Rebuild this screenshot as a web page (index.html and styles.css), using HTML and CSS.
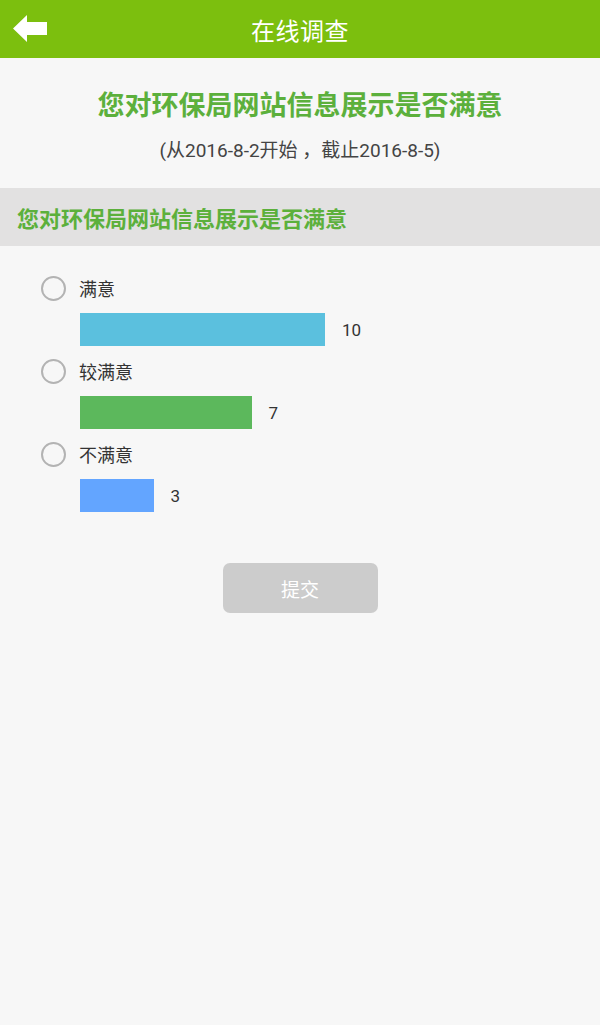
FILE: index.html
```html
<!DOCTYPE html>
<html lang="zh">
<head>
<meta charset="utf-8">
<title>在线调查</title>
<link rel="stylesheet" href="styles.css">
</head>
<body>
<header class="topbar">
  <a class="back" aria-label="返回">
    <svg width="34" height="27" viewBox="0 0 34 27"><polygon points="0,13.5 14,0 14,7 34,7 34,20 14,20 14,27" fill="#fff"/></svg>
  </a>
  <h1 class="topbar-title">在线调查</h1>
</header>
<section class="intro">
  <h2 class="survey-title">您对环保局网站信息展示是否满意</h2>
  <p class="survey-date">(从2016-8-2开始 ，截止2016-8-5)</p>
</section>
<div class="question">您对环保局网站信息展示是否满意</div>
<ul class="options">
  <li class="option">
    <label class="choice"><span class="radio"></span><span class="label">满意</span></label>
    <div class="result"><div class="track"><span class="bar bar-blue" style="width:50%"></span><span class="count">10</span></div></div>
  </li>
  <li class="option">
    <label class="choice"><span class="radio"></span><span class="label">较满意</span></label>
    <div class="result"><div class="track"><span class="bar bar-green" style="width:35%"></span><span class="count">7</span></div></div>
  </li>
  <li class="option">
    <label class="choice"><span class="radio"></span><span class="label">不满意</span></label>
    <div class="result"><div class="track"><span class="bar bar-sky" style="width:15%"></span><span class="count">3</span></div></div>
  </li>
</ul>
<div class="actions"><button class="submit">提交</button></div>
</body>
</html>
```
FILE: styles.css
```css
* { box-sizing: border-box; }
html, body { margin: 0; padding: 0; }
body {
  background: #f7f7f7;
  font-family: Roboto, "Noto Sans CJK SC", "Noto Sans", sans-serif;
  color: #333;
  width: 600px;
  min-height: 1025px;
}
.topbar {
  height: 58px;
  background: #7cbf0e;
  display: flex;
  align-items: center;
  justify-content: center;
  position: relative;
}
.back {
  position: absolute;
  left: 13px;
  top: 15px;
  display: block;
  width: 34px;
  height: 27px;
}
.back svg { display: block; }
.topbar-title {
  margin: 0;
  color: #fff;
  font-size: 24px;
  font-weight: normal;
  letter-spacing: 0.5px;
}
.intro {
  text-align: center;
  padding: 30px 0 24px;
}
.survey-title {
  margin: 0;
  color: #5cb03c;
  font-size: 27px;
  font-weight: bold;
  line-height: 36px;
}
.survey-date {
  margin: 14px 0 0;
  color: #444;
  font-size: 19px;
  line-height: 26px;
}
.question {
  height: 58px;
  background: #e2e1e1;
  color: #5cb03c;
  font-size: 22px;
  font-weight: bold;
  display: flex;
  align-items: center;
  padding-left: 17px;
}
.options {
  list-style: none;
  margin: 0;
  padding: 30px 30px 0 41px;
}
.option { margin-bottom: 13px; }
.choice {
  display: flex;
  align-items: center;
  height: 24px;
}
.radio {
  width: 25px;
  height: 25px;
  border: 2px solid #b3b3b3;
  border-radius: 50%;
  flex: none;
}
.label {
  margin-left: 13px;
  font-size: 18px;
  color: #333;
}
.result {
  padding-left: 39px;
  margin-top: 13px;
}
.track {
  display: flex;
  align-items: center;
  width: 490px;
  height: 33px;
}
.bar {
  display: block;
  height: 33px;
}
.bar-blue { background: #5bc0de; }
.bar-green { background: #5cb85c; }
.bar-sky { background: #63a5ff; }
.count {
  margin-left: 17px;
  font-size: 17px;
  color: #333;
}
.actions {
  display: flex;
  justify-content: center;
  padding-top: 38px;
}
.submit {
  width: 155px;
  height: 50px;
  border: none;
  border-radius: 7px;
  background: #cccccc;
  color: #fff;
  font-family: inherit;
  font-size: 19px;
}
```
